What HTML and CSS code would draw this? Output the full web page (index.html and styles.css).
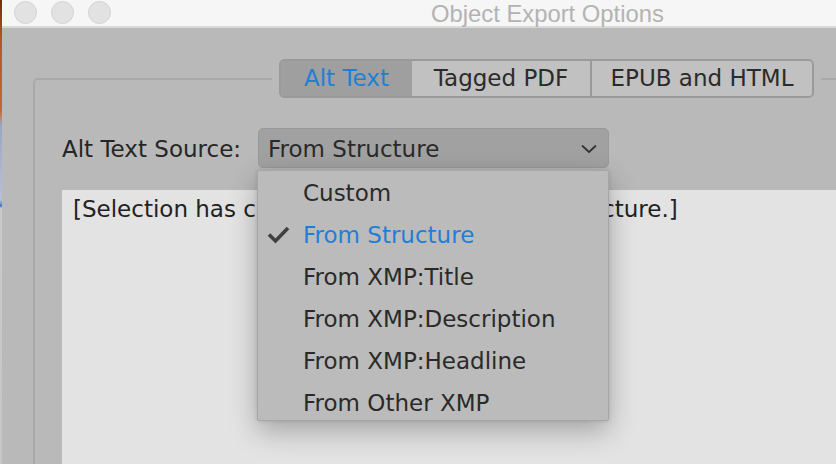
FILE: index.html
```html
<!DOCTYPE html>
<html>
<head>
<meta charset="utf-8">
<link rel="stylesheet" href="styles.css">
</head>
<body>
<div class="screen">
  <div class="desk"></div>
  <div class="window">
    <div class="titlebar">
      <span class="light"></span>
      <span class="light"></span>
      <span class="light"></span>
      <span class="title">Object Export Options</span>
    </div>
    <div class="content">
      <div class="panel">
        <div class="tabs-wrap">
          <div class="tabs">
            <div class="tab tab-alt active">Alt Text</div>
            <div class="tab tab-pdf">Tagged PDF</div>
            <div class="tab tab-epub">EPUB and HTML</div>
          </div>
        </div>
        <div class="source-row">
          <span class="label">Alt Text Source:</span>
          <div class="select">
            <span class="select-text">From Structure</span>
            <svg class="chevron" width="16" height="10" viewBox="0 0 16 10"><path d="M1.5 2 L8 8 L14.5 2" fill="none" stroke="#333" stroke-width="1.8" stroke-linecap="round" stroke-linejoin="round"/></svg>
          </div>
          <div class="menu">
            <div class="item">Custom</div>
            <div class="item checked">
              <svg class="check" width="24" height="20" viewBox="0 0 24 20"><path d="M2 9.5 L8.5 16 L21 3" fill="none" stroke="#404040" stroke-width="3.6" stroke-linejoin="miter"/></svg>
              From Structure
            </div>
            <div class="item">From XMP:Title</div>
            <div class="item">From XMP:Description</div>
            <div class="item">From XMP:Headline</div>
            <div class="item">From Other XMP</div>
          </div>
        </div>
        <div class="textarea">[Selection has contents with alt text from structure.]</div>
      </div>
    </div>
  </div>
</div>
</body>
</html>
```

FILE: styles.css
```css
html, body {
  margin: 0;
  padding: 0;
}
body {
  width: 836px;
  height: 464px;
  overflow: hidden;
  background: #b9b9b9;
  font-family: "DejaVu Sans", sans-serif;
  font-size: 23px;
  color: #262626;
}
.screen {
  display: flex;
  width: 836px;
  height: 464px;
  overflow: hidden;
}
.desk {
  width: 2px;
  flex: none;
  background: linear-gradient(to bottom, #7a2a10 0px, #b8561f 40px, #c8672b 110px, #9aa6c0 125px, #b7c0d6 200px, #3b73c8 206px, #c9c9c9 208px, #c6c6c6 464px);
}
.window {
  flex: none;
  width: 1100px;
  display: flex;
  flex-direction: column;
  background: #b9b9b9;
}
.titlebar {
  background: #f6f6f6;
  border-bottom: 2px solid #d9d9d9;
  display: flex;
  align-items: flex-start;
  padding-left: 12px;
  padding-top: 1px;
  height: 25px;
}
.light {
  width: 21px;
  height: 21px;
  border-radius: 50%;
  background: #e2e2e2;
  border: 1px solid #d3d3d3;
  margin-right: 14px;
  flex: none;
}
.title {
  margin-left: 306px;
  font-family: "Liberation Sans", Arial, sans-serif;
  font-size: 23.8px;
  line-height: 25px;
  color: #b3b3b3;
  white-space: nowrap;
}
.content {
  padding: 50px 0 0 31px;
  flex: 1;
}
.panel {
  border: 2px solid #a9a9a9;
  border-radius: 5px;
  height: 600px;
  padding-left: 27px;
}
.tabs-wrap {
  display: flex;
  margin-top: -21px;
  margin-left: 217px;
}
.tabs {
  display: flex;
  height: 35px;
  border: 2px solid #9a9a9a;
  border-radius: 5px;
  background: #c1c1c1;
  outline: 7px solid #b9b9b9;
  overflow: hidden;
}
.tab {
  display: flex;
  align-items: center;
  justify-content: center;
  color: #2b2b2b;
  white-space: nowrap;
  line-height: 1;
}
.tab-alt { width: 131px; }
.tab-pdf { width: 178px; }
.tab-epub { width: 220px; border-left: 2px solid #9a9a9a; }
.tab.active {
  background: #9f9f9f;
  color: #1f7fd8;
}
.source-row {
  position: relative;
  display: flex;
  align-items: center;
  margin-top: 30px;
}
.label {
  width: 196px;
  white-space: nowrap;
  padding-top: 2px;
}
.select {
  width: 351px;
  height: 40px;
  box-sizing: border-box;
  background: #a1a1a1;
  border: 1px solid #999;
  border-radius: 5px;
  display: flex;
  align-items: center;
  justify-content: space-between;
  padding: 2px 11px 0 9px;
}
.select-text {
  white-space: nowrap;
  color: #2a2a2a;
}
.chevron {
  display: block;
}
.menu {
  position: absolute;
  left: 195px;
  top: 42px;
  width: 352px;
  height: 251px;
  overflow: hidden;
  box-sizing: border-box;
  background: #bbbbbb;
  border: 1px solid #a6a6a6;
  border-radius: 2px;
  box-shadow: 0 10px 28px rgba(0, 0, 0, 0.28), 0 0 4px rgba(0, 0, 0, 0.12);
  z-index: 5;
}
.item {
  position: relative;
  height: 42px;
  display: flex;
  align-items: center;
  padding-left: 45px;
  padding-top: 2px;
  box-sizing: border-box;
  white-space: nowrap;
  color: #2a2a2a;
  flex: none;
}
.item.checked {
  color: #1f7fd8;
}
.check {
  position: absolute;
  left: 9px;
  top: 12px;
}
.textarea {
  margin-top: 22px;
  background: #e3e3e3;
  height: 400px;
  padding: 6px 0 0 11px;
  white-space: nowrap;
  color: #222;
}
```
